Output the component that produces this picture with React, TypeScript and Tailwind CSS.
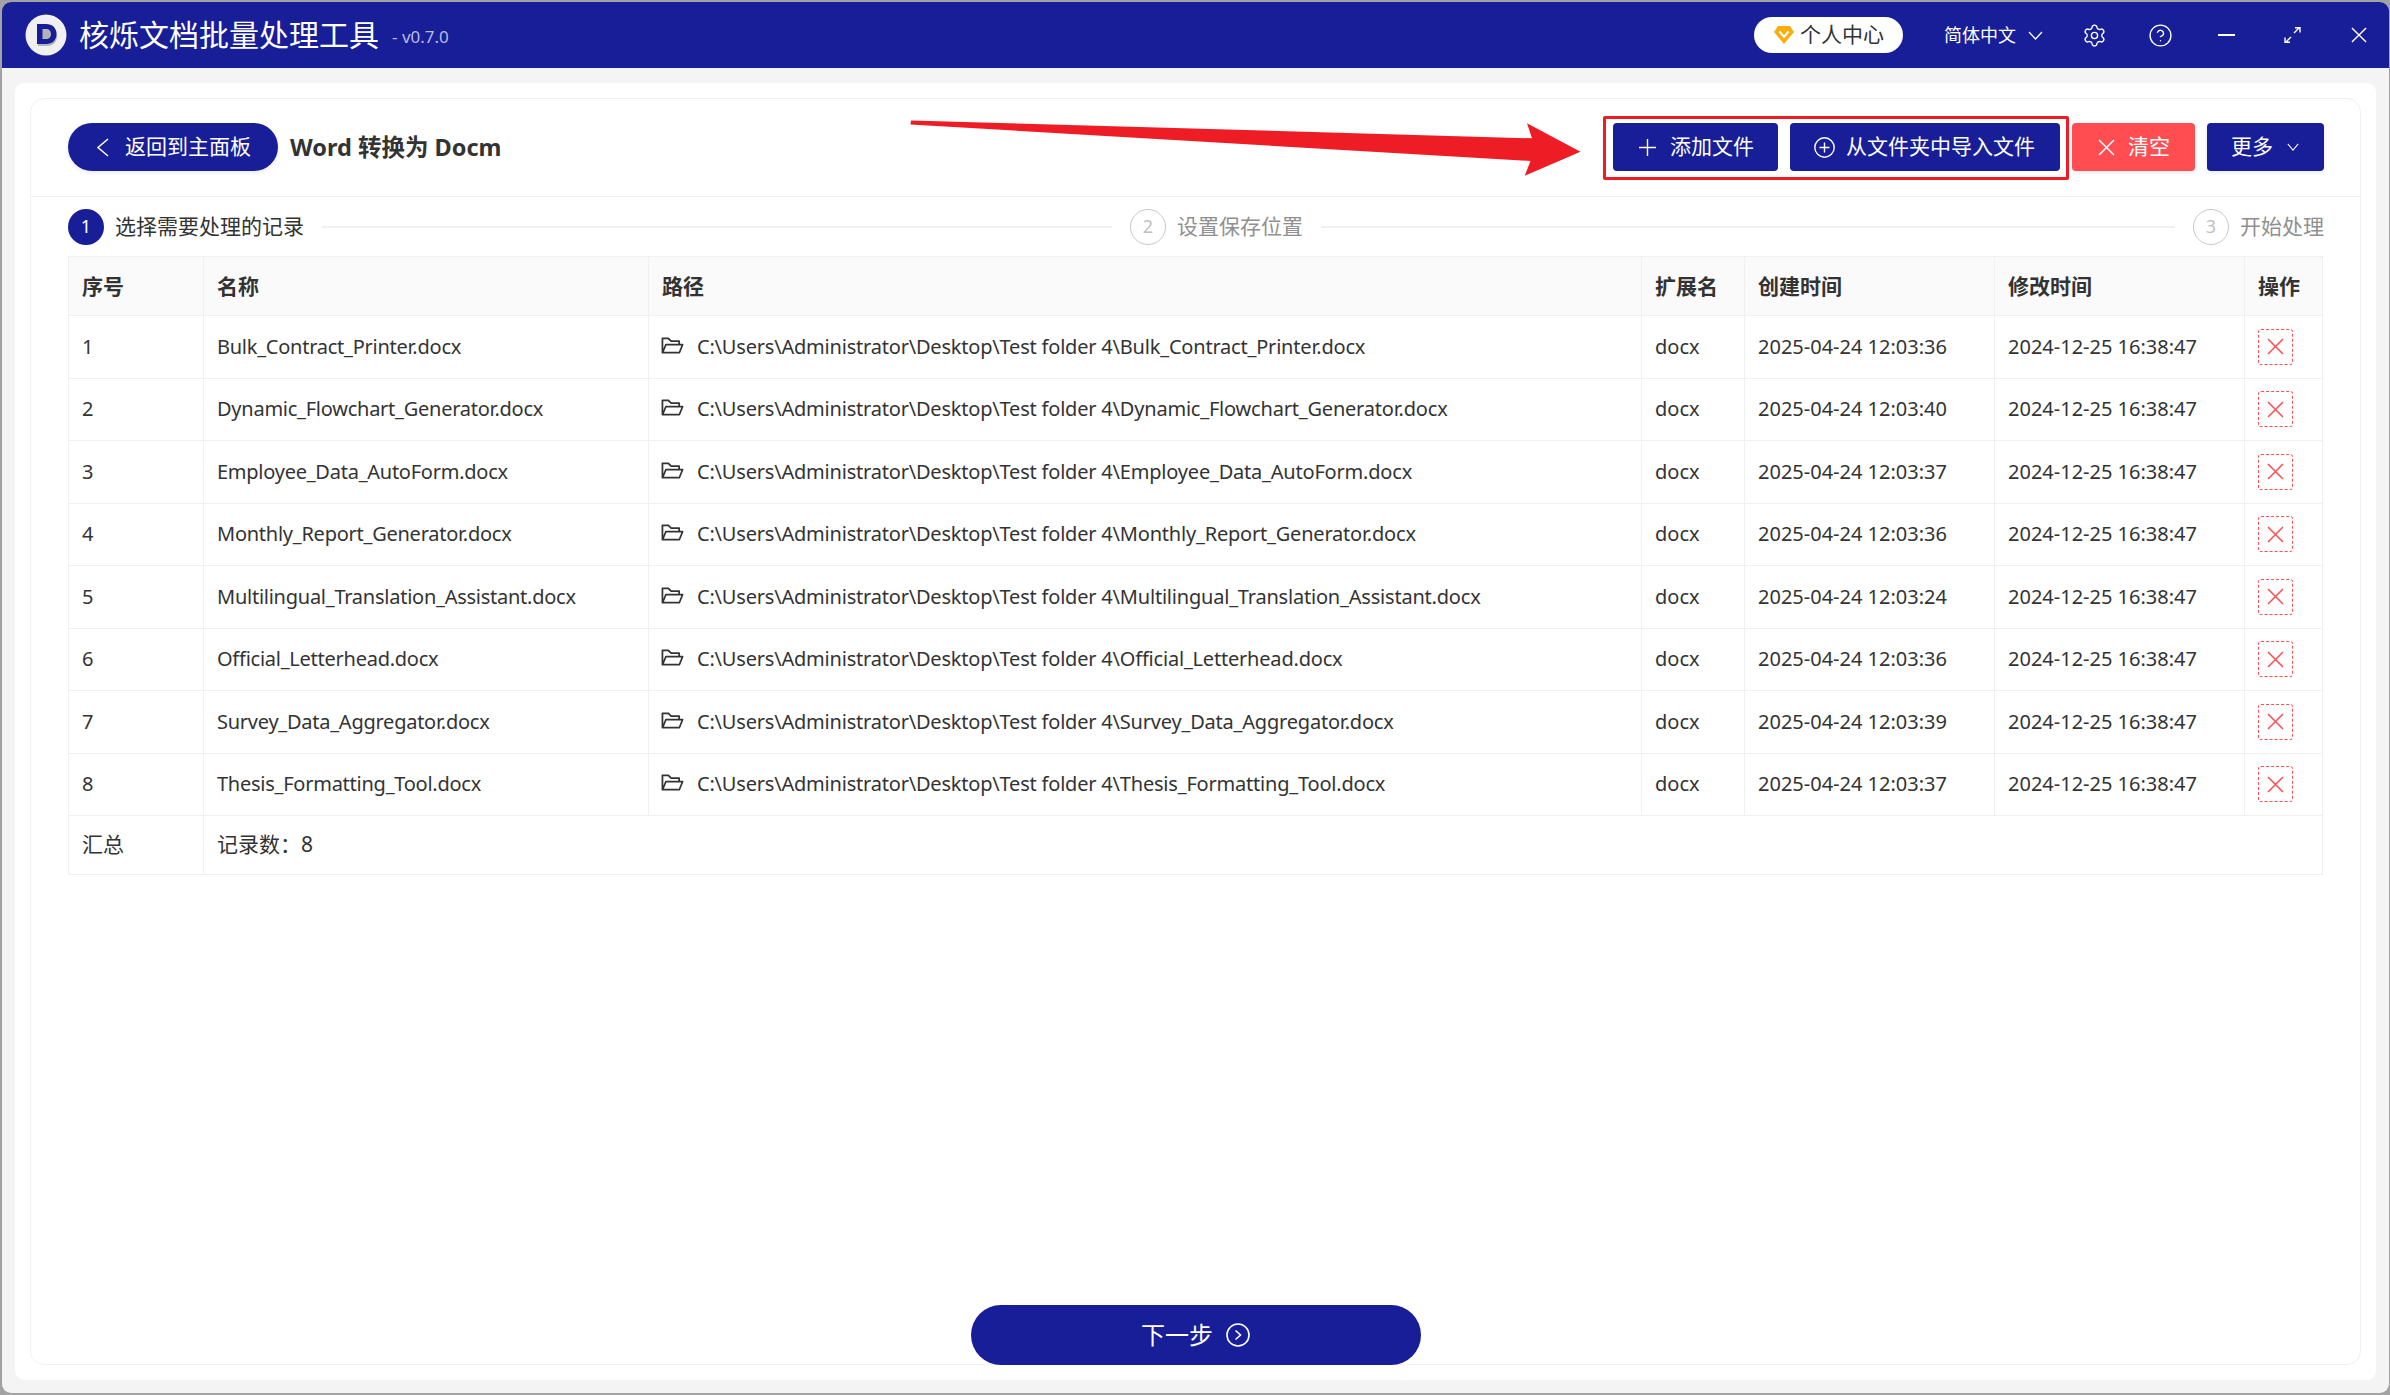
import { CircleHelp, Settings } from "lucide-react";
import { AiOutlineFolderOpen } from "react-icons/ai";

const rows = [
  ["Bulk_Contract_Printer.docx", "2025-04-24 12:03:36"],
  ["Dynamic_Flowchart_Generator.docx", "2025-04-24 12:03:40"],
  ["Employee_Data_AutoForm.docx", "2025-04-24 12:03:37"],
  ["Monthly_Report_Generator.docx", "2025-04-24 12:03:36"],
  ["Multilingual_Translation_Assistant.docx", "2025-04-24 12:03:24"],
  ["Official_Letterhead.docx", "2025-04-24 12:03:36"],
  ["Survey_Data_Aggregator.docx", "2025-04-24 12:03:39"],
  ["Thesis_Formatting_Tool.docx", "2025-04-24 12:03:37"],
];

const thClass = "border border-[#f0f0f0] px-[13px] pt-[2px] text-left font-bold";
const tdClass = "border border-[#f0f0f0] px-[13px] whitespace-nowrap";

function Cross({ size = 17, color = "currentColor", width = 1.5 }: { size?: number; color?: string; width?: number }) {
  return (
    <svg width={size} height={size} viewBox="0 0 17 17" fill="none" stroke={color} strokeWidth={width}>
      <path d="M1 1l15 15M16 1L1 16" />
    </svg>
  );
}

function Chevron({ w = 15, h = 9 }: { w?: number; h?: number }) {
  return (
    <svg width={w} height={h} viewBox="0 0 15 9" fill="none" stroke="currentColor" strokeWidth="1.3" preserveAspectRatio="none">
      <path d="M1 1l6.500 7L14 1" />
    </svg>
  );
}

function Logo() {
  return (
    <svg width="42" height="42" viewBox="0 0 42 42">
      <circle cx="21" cy="21" r="20.500" fill="#f0f0f0" />
      <path d="M13 12h9c6 0 10 4 10 10s-4 10-10 10h-9z" fill="#b4b4b8" />
      <path fillRule="evenodd" d="M12 10h9c6.500 0 10.500 4 10.500 10S27.500 30 21 30h-9zM17.500 15v10h3.500c3 0 5-2 5-5s-2-5-5-5z" fill="#181e98" />
    </svg>
  );
}

function Gem() {
  return (
    <svg width="20" height="18" viewBox="0 0 20 18">
      <path d="M4 0h12l4 6-10 12L0 6z" fill="#f7ae0e" />
      <path d="M5.500 5.500L10 11l4.500-5.500" fill="none" stroke="#fff" strokeWidth="2" />
    </svg>
  );
}

function Expand() {
  return (
    <svg width="17" height="16" viewBox="0 0 17 16" fill="none" stroke="#fff" strokeWidth="1.4">
      <path d="M10 6l5-5M11 .8h5v4.700M7 10l-5 5M6 15.200H1v-4.700" />
    </svg>
  );
}

function Step({ n, label, active }: { n: number; label: string; active?: boolean }) {
  return (
    <div className="flex items-center gap-[11px]">
      {active ? (
        <div className="flex h-[36px] w-[36px] items-center justify-center rounded-full bg-[#181e98] text-[18px] text-white">{n}</div>
      ) : (
        <div className="flex h-[36px] w-[36px] items-center justify-center rounded-full border border-[#c8c8c8] text-[18px] text-[#c0c0c0]">{n}</div>
      )}
      <span className={active ? "text-[21px] text-[#333]" : "text-[21px] text-[#909090]"}>{label}</span>
    </div>
  );
}

export default function App() {
  return (
    <div
      className="relative h-[1395px] w-[2390px] overflow-hidden bg-[#a3a3a3] pt-[2px] pr-[1px] pb-[2px] pl-[2px] text-[#333]"
      style={{ fontFamily: "'Noto Sans', 'Noto Sans CJK SC', sans-serif" }}
    >
      <div className="flex h-full w-full flex-col overflow-hidden rounded-[9px] bg-[#f4f4f4]">
        {/* title bar */}
        <header className="flex h-[66px] shrink-0 items-center bg-[#181e98] pl-[23px] text-white">
          <Logo />
          <span className="ml-[12px] text-[30px] leading-none">核烁文档批量处理工具</span>
          <span className="ml-[13px] mt-[4px] text-[17px] text-[#b9bbe0]">- v0.7.0</span>
          <div className="ml-auto flex h-[36px] w-[149px] items-center gap-[6px] rounded-full bg-white pl-[20px] text-[21px] text-[#333]">
            <Gem />
            <span>个人中心</span>
          </div>
          <span className="ml-[41px] text-[18px]">简体中文</span>
          <span className="ml-[12px]"><Chevron /></span>
          <Settings className="ml-[39px]" size={25} strokeWidth={1.3} />
          <CircleHelp className="ml-[41px]" size={25} strokeWidth={1.3} />
          <div className="ml-[45px] h-[2px] w-[17px] bg-white" />
          <div className="ml-[49px]"><Expand /></div>
          <div className="ml-[50px] mr-[22px]"><Cross size={16} color="#fff" /></div>
        </header>

        <div className="flex min-h-0 flex-1 flex-col px-[13px] pt-[15px] pb-[13px]">
          <div className="flex min-h-0 flex-1 flex-col rounded-[9px] bg-white p-[15px]">
            <div className="flex min-h-0 flex-1 flex-col rounded-[14px] border border-[#f0f0f0]">
              {/* toolbar */}
              <div className="flex h-[98px] shrink-0 items-center border-b border-[#f0f0f0] pr-[36px] pl-[37px]">
                <button className="-mt-[1px] flex h-[48px] w-[210px] items-center gap-[16px] rounded-full bg-[#181e98] pl-[28px] text-[21px] text-white shadow-[0_2px_4px_rgba(0,0,0,0.08)]">
                  <svg width="13" height="19" viewBox="0 0 13 19" fill="none" stroke="currentColor" strokeWidth="1.5">
                    <path d="M12 1L2 9.500 12 18" />
                  </svg>
                  <span>返回到主面板</span>
                </button>
                <span className="ml-[12px] text-[23.500px] font-bold">Word 转换为 Docm</span>

                <div className="-mt-[1px] ml-auto flex items-center gap-[12px] text-[21px] text-white">
                  <button className="flex h-[48px] w-[165px] items-center gap-[14px] rounded-[4px] bg-[#181e98] pl-[26px]">
                    <svg width="17" height="17" viewBox="0 0 17 17" fill="none" stroke="currentColor" strokeWidth="1.4">
                      <path d="M8.500 0v17M0 8.500h17" />
                    </svg>
                    <span>添加文件</span>
                  </button>
                  <button className="flex h-[48px] w-[270px] items-center gap-[11px] rounded-[4px] bg-[#181e98] pl-[24px]">
                    <svg width="21" height="21" viewBox="0 0 21 21" fill="none" stroke="currentColor" strokeWidth="1.4">
                      <circle cx="10.500" cy="10.500" r="9.700" />
                      <path d="M10.500 5.500v10M5.500 10.500h10" />
                    </svg>
                    <span>从文件夹中导入文件</span>
                  </button>
                  <button className="flex h-[48px] w-[123px] items-center gap-[13px] rounded-[4px] bg-[#ff4d52] pl-[26px] shadow-[0_2px_4px_rgba(0,0,0,0.08)]">
                    <Cross size={17} />
                    <span>清空</span>
                  </button>
                  <button className="flex h-[48px] w-[117px] items-center gap-[14px] rounded-[4px] bg-[#181e98] pl-[24px] shadow-[0_2px_4px_rgba(0,0,0,0.08)]">
                    <span>更多</span>
                    <Chevron w={12} h={8} />
                  </button>
                </div>
              </div>

              {/* steps */}
              <div className="flex h-[59px] shrink-0 items-center gap-[18px] pr-[36px] pl-[37px]">
                <Step n={1} label="选择需要处理的记录" active />
                <div className="h-[2px] w-[790px] bg-[#f0f0f0]" />
                <Step n={2} label="设置保存位置" />
                <div className="h-[2px] flex-1 bg-[#f0f0f0]" />
                <Step n={3} label="开始处理" />
              </div>

              {/* file table */}
              <div className="pr-[36px] pl-[37px]">
                <table className="w-[2254px] table-fixed border-collapse text-[20px] text-[#333]">
                  <colgroup>
                    <col className="w-[135px]" />
                    <col className="w-[445px]" />
                    <col className="w-[993px]" />
                    <col className="w-[103px]" />
                    <col className="w-[250px]" />
                    <col className="w-[250px]" />
                    <col className="w-[78px]" />
                  </colgroup>
                  <thead>
                    <tr className="h-[59px] bg-[#fafafa] text-[21px]">
                      <th className={thClass}>序号</th>
                      <th className={thClass}>名称</th>
                      <th className={thClass}>路径</th>
                      <th className={thClass}>扩展名</th>
                      <th className={thClass}>创建时间</th>
                      <th className={thClass}>修改时间</th>
                      <th className={thClass}>操作</th>
                    </tr>
                  </thead>
                  <tbody>
                    {rows.map(([name, created], i) => (
                      <tr key={name} className="h-[62.500px]">
                        <td className={tdClass}>{i + 1}</td>
                        <td className={tdClass + " tracking-[-0.25px]"}>{name}</td>
                        <td className={tdClass + " tracking-[-0.2px]"}>
                          <div className="-ml-[2px] flex items-center gap-[12px]">
                            <AiOutlineFolderOpen size={25} className="-mt-[3px] shrink-0 text-[#333]" />
                            <span>{"C:\\Users\\Administrator\\Desktop\\Test folder 4\\" + name}</span>
                          </div>
                        </td>
                        <td className={tdClass}>docx</td>
                        <td className={tdClass}>{created}</td>
                        <td className={tdClass}>2024-12-25 16:38:47</td>
                        <td className={tdClass}>
                          <div className="flex h-[36px] w-[35px] items-center justify-center rounded-[3px] border border-dashed border-[#ff4d52]">
                            <Cross size={17} color="#ff4d52" />
                          </div>
                        </td>
                      </tr>
                    ))}
                    <tr className="h-[59px] text-[21px]">
                      <td className={tdClass}>汇总</td>
                      <td className={tdClass} colSpan={6}>记录数：8</td>
                    </tr>
                  </tbody>
                </table>
              </div>

              <div className="mt-auto flex justify-center">
                <button className="-mb-[1px] flex h-[60px] w-[450px] items-center justify-center gap-[13px] rounded-full bg-[#181e98] text-[24px] text-white">
                  <span>下一步</span>
                  <svg width="24" height="24" viewBox="0 0 24 24" fill="none" stroke="currentColor" strokeWidth="1.6">
                    <circle cx="12" cy="12" r="11" />
                    <path d="M9.500 7.500l5 4.500-5 4.500" />
                  </svg>
                </button>
              </div>
            </div>
          </div>
        </div>
      </div>

      {/* screenshot annotation: arrow and box */}
      <svg className="absolute top-0 left-0" width="2390" height="200" viewBox="0 0 2390 200">
        <path d="M911 120.500L1532 138.300 1527 123.300 1580.500 151.700 1524.700 175.700 1530.500 161 910.500 124.500z" fill="#ee1c25" />
      </svg>
      <div className="absolute top-[116px] left-[1603px] h-[64px] w-[466px] rounded-[2px] border-[3px] border-[#ee1c25]" />
    </div>
  );
}
